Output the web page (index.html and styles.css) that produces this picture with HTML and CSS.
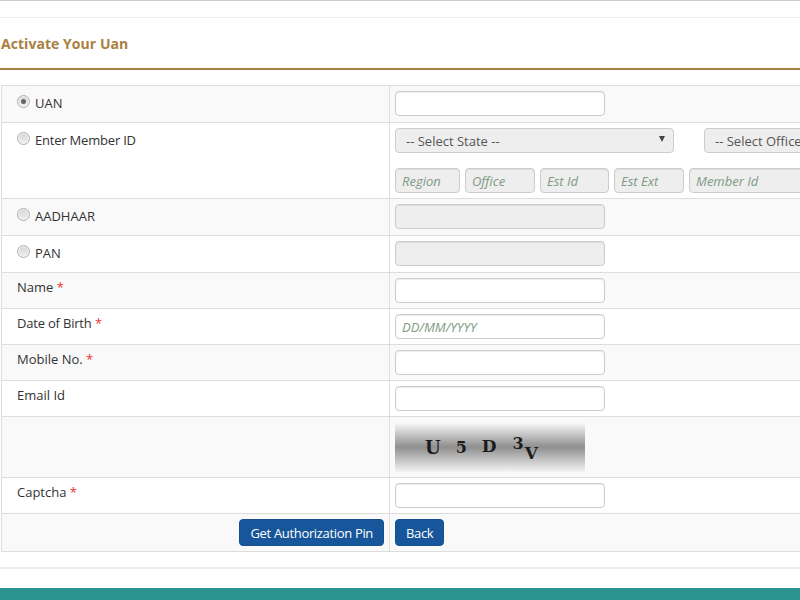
FILE: index.html
```html
<!DOCTYPE html>
<html lang="en">
<head>
<meta charset="utf-8">
<title>Activate Your Uan</title>
<link rel="stylesheet" href="styles.css">
</head>
<body>
<div class="panel">
  <h1 class="title">Activate Your Uan</h1>
  <div class="table-wrap">
    <table class="form-table">
      <colgroup><col class="col-label"><col class="col-field"></colgroup>
      <tbody>
        <tr class="row-choice row-uan">
          <td><span class="choice"><span class="radio radio-on"></span><span>UAN</span></span></td>
          <td><input class="box" type="text"></td>
        </tr>
        <tr class="row-member">
          <td><span class="choice"><span class="radio"></span><span class="tight">Enter Member ID</span></span></td>
          <td>
            <div class="member-line">
              <div class="select select-state"><span>-- Select State --</span><span class="caret"></span></div>
              <div class="select select-office"><span>-- Select Office --</span><span class="caret"></span></div>
            </div>
            <div class="member-line member-parts">
              <input class="box off part-region" type="text" placeholder="Region" disabled>
              <input class="box off part-office" type="text" placeholder="Office" disabled>
              <input class="box off part-est" type="text" placeholder="Est Id" disabled>
              <input class="box off part-ext" type="text" placeholder="Est Ext" disabled>
              <input class="box off part-member" type="text" placeholder="Member Id" disabled>
            </div>
          </td>
        </tr>
        <tr class="row-choice">
          <td><span class="choice"><span class="radio"></span><span>AADHAAR</span></span></td>
          <td><input class="box off" type="text" disabled></td>
        </tr>
        <tr class="row-choice">
          <td><span class="choice"><span class="radio"></span><span>PAN</span></span></td>
          <td><input class="box off" type="text" disabled></td>
        </tr>
        <tr class="row-plain">
          <td>Name <span class="req">*</span></td>
          <td><input class="box" type="text"></td>
        </tr>
        <tr class="row-plain">
          <td><span class="tight">Date of Birth</span> <span class="req">*</span></td>
          <td><input class="box" type="text" placeholder="DD/MM/YYYY"></td>
        </tr>
        <tr class="row-plain">
          <td>Mobile No. <span class="req">*</span></td>
          <td><input class="box" type="text"></td>
        </tr>
        <tr class="row-plain">
          <td>Email Id</td>
          <td><input class="box" type="text"></td>
        </tr>
        <tr class="row-image">
          <td></td>
          <td>
            <div class="captcha">
              <span class="cc cc-u">U</span><span class="cc cc-5">5</span><span class="cc cc-d">D</span><span class="cc cc-3">3</span><span class="cc cc-v">V</span>
            </div>
          </td>
        </tr>
        <tr class="row-plain">
          <td>Captcha <span class="req">*</span></td>
          <td><input class="box" type="text"></td>
        </tr>
        <tr class="row-actions">
          <td class="cell-right"><button class="btn" type="button">Get Authorization Pin</button></td>
          <td><button class="btn" type="button">Back</button></td>
        </tr>
      </tbody>
    </table>
  </div>
</div>
<div class="footer-bar"></div>
</body>
</html>
```
FILE: styles.css
```css
* { box-sizing: border-box; }
html, body { margin: 0; height: 600px; overflow: hidden; background: #fff; }
body {
  font-family: "Open Sans", "Liberation Sans", sans-serif;
  font-size: 13px;
  color: #333;
  border-top: 1px solid #ccc;
}
.panel {
  margin-top: 16px;
  border-top: 1px solid #eee;
  border-bottom: 2px solid #eee;
  height: 552px;
}
.title {
  margin: 0;
  height: 52px;
  padding: 16px 0 0 1px;
  font-size: 14px;
  line-height: 19px;
  font-weight: 700;
  letter-spacing: .05px;
  color: #a9803f;
  border-bottom: 2px solid #a5813f;
}
.table-wrap { margin: 15px 0 0 1px; width: 1000px; }
.form-table { border-collapse: collapse; table-layout: fixed; width: 1000px; }
.col-label { width: 388px; }
.col-field { width: 612px; }
.form-table td { border: 1px solid #ddd; padding: 5px; vertical-align: top; line-height: 18px; }
.form-table td:first-child { padding-left: 15px; }
.form-table td.cell-right { padding-left: 5px; }
.form-table tr:nth-child(odd) td { background: #f9f9f9; }
.row-choice td { height: 37px; }
.row-member td { height: 76px; }
.row-plain td { height: 36px; }
.row-image td { height: 61px; }
.row-actions td { height: 38px; }
.row-choice td:first-child { padding-top: 8px; }
.row-member td:first-child { padding-top: 8px; }
.row-plain td:first-child { padding-top: 5px; }
.choice { display: flex; align-items: flex-start; gap: 5px; }
.tight { letter-spacing: -.2px; }
.radio {
  width: 13px; height: 13px; border-radius: 50%; flex: none; margin-top: 1px;
  background: linear-gradient(#d5d5d5, #efefef);
  border: 1px solid #b0b0b0;
  box-shadow: inset 0 0 0 1px #f4f4f4;
  display: flex; align-items: center; justify-content: center;
}
.radio-on::after { content: ""; width: 5px; height: 5px; border-radius: 50%; background: #666; }
.req { color: #e33; }
.box {
  display: block;
  width: 210px; height: 25px;
  border: 1px solid #ccc;
  border-radius: 4px;
  background: #fff;
  padding: 0 6px;
  margin: 0;
  font: italic 13px "Open Sans", "Liberation Sans", sans-serif;
  box-shadow: inset 0 1px 1px rgba(0,0,0,.075);
}
.box::placeholder { color: #7d9a84; opacity: 1; }
.box.off { background: #eee; }
.member-line { display: flex; }
.member-parts { margin-top: 15px; gap: 5px; }
.select {
  height: 25px; border: 1px solid #ccc; border-radius: 4px; background: #eee;
  display: flex; align-items: center; justify-content: space-between;
  padding: 2px 8px 0 10px; line-height: 21px; color: #555; flex: none;
}
.select-state { width: 279px; }
.select-office { width: 279px; margin-left: 30px; }
.caret {
  width: 0; height: 0; margin-top: -5px;
  border-left: 3px solid transparent; border-right: 3px solid transparent; border-top: 6px solid #444;
}
.part-region { width: 65px; }
.part-office { width: 70px; }
.part-est { width: 69px; }
.part-ext { width: 70px; }
.part-member { width: 150px; }
.captcha {
  width: 190px; height: 50px;
  background: linear-gradient(#fbfbfb 0, #8f8f8f 50%, #f4f4f4 100%);
  display: flex; align-items: flex-start;
  font-family: "DejaVu Serif", "Liberation Serif", serif;
  font-weight: 700; color: #1c1c1c; line-height: 18px;
}
.cc { display: block; font-size: 17px; }
.cc-u { margin: 17px 0 0 30px; font-size: 18px; }
.cc-5 { margin: 17px 0 0 15px; font-size: 16px; }
.cc-d { margin: 15px 0 0 15px; }
.cc-3 { margin: 13px 0 0 16px; font-size: 16px; }
.cc-v { margin: 22px 0 0 1px; }
.cell-right { text-align: right; }
.btn {
  height: 27px; padding: 0 10px; border: 1px solid #14508f; border-radius: 4px;
  background: #17569a; color: #fff;
  font: 13px "Open Sans", "Liberation Sans", sans-serif;
  letter-spacing: -.33px;
}
.footer-bar { margin-top: 19px; height: 12px; background: #2b9391; }
```
